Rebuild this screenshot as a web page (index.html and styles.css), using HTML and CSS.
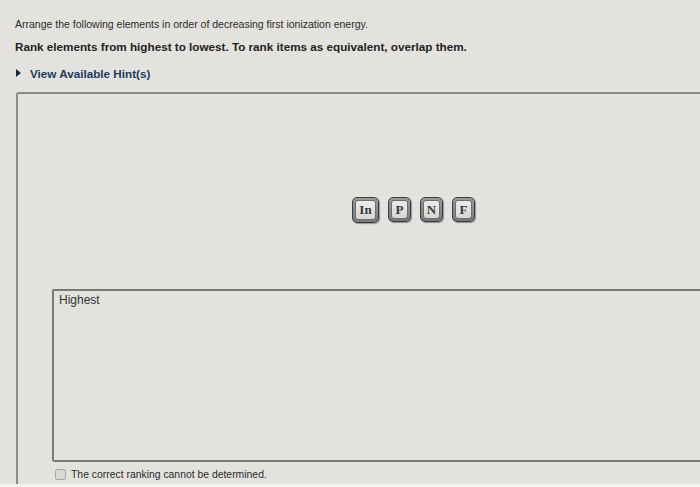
FILE: index.html
```html
<!DOCTYPE html>
<html>
<head>
<meta charset="utf-8">
<link rel="stylesheet" href="styles.css">
</head>
<body>
<div class="page">
  <p class="q">Arrange the following elements in order of decreasing first ionization energy.</p>
  <p class="inst">Rank elements from highest to lowest. To rank items as equivalent, overlap them.</p>
  <div class="hint"><span class="tri"></span><span class="hint-text">View Available Hint(s)</span></div>
  <div class="outer">
    <div class="tiles">
      <div class="tile wide"><span>In</span></div>
      <div class="tile"><span>P</span></div>
      <div class="tile"><span>N</span></div>
      <div class="tile"><span>F</span></div>
    </div>
    <div class="rank">
      <div class="rank-label">Highest</div>
    </div>
    <div class="check-row"><span class="box"></span><span class="check-text">The correct ranking cannot be determined.</span></div>
  </div>
</div>
<div class="strip"></div>
</body>
</html>
```
FILE: styles.css
```css
html, body {
  margin: 0;
  padding: 0;
  height: 487px;
  overflow: hidden;
}
body {
  background: #e4e2df;
  font-family: "Liberation Sans", Arial, sans-serif;
  color: #222;
  position: relative;
}
.page {
  padding: 17px 0 0 15px;
}
.q {
  margin: 0;
  font-size: 10.5px;
  line-height: 14px;
  color: #2a2a2a;
}
.inst {
  margin: 9px 0 0 0;
  font-size: 11.7px;
  line-height: 14px;
  font-weight: bold;
  color: #222;
}
.hint {
  display: flex;
  align-items: center;
  margin: 12px 0 0 1px;
  height: 14px;
}
.tri {
  width: 0;
  height: 0;
  border-top: 4px solid transparent;
  border-bottom: 4px solid transparent;
  border-left: 5px solid #1e2a3a;
  margin-right: 9px;
}
.hint-text {
  font-size: 11.7px;
  font-weight: bold;
  color: #1d3a5c;
}
.outer {
  margin: 12px 0 0 1px;
  border-top: 2px solid #8c8b8a;
  border-left: 2px solid #8c8b8a;
  border-top-left-radius: 3px;
  height: 394px;
  padding-top: 103px;
  box-sizing: border-box;
}
.tiles {
  display: flex;
  gap: 9px;
  margin-left: 334px;
  height: 27px;
}
.tile {
  width: 23px;
  height: 25px;
  border: 1px solid #3c3c3c;
  border-radius: 5px;
  background: linear-gradient(#9a9a9a, #7a7a7a);
  box-shadow: 1px 1px 1px rgba(0,0,0,0.35);
  padding: 2px;
  box-sizing: border-box;
  display: flex;
}
.tile.wide {
  width: 27px;
  height: 26px;
}
.tile span {
  flex: 1;
  background: linear-gradient(#ececeb, #d6d6d4);
  border-radius: 3px;
  border: 1px solid #6e6e6e;
  display: flex;
  align-items: center;
  justify-content: center;
  font-family: "Liberation Serif", "Times New Roman", serif;
  font-size: 13px;
  font-weight: bold;
  color: #3a3a3a;
}
.rank {
  margin: 65px 0 0 34px;
  border-top: 2px solid #7a7978;
  border-left: 2px solid #7a7978;
  border-bottom: 2px solid #7a7978;
  border-top-left-radius: 2px;
  border-bottom-left-radius: 3px;
  height: 173px;
  box-sizing: border-box;
  padding: 2px 0 0 5px;
}
.rank-label {
  font-size: 12px;
  line-height: 14px;
  color: #333;
}
.check-row {
  display: flex;
  align-items: center;
  margin: 7px 0 0 37px;
}
.box {
  width: 9px;
  height: 9px;
  border: 1px solid #a8a8a8;
  border-radius: 2px;
  background: #dcdad8;
  margin-right: 5px;
}
.check-text {
  font-size: 10.4px;
  color: #2a2a2a;
}
.strip {
  position: absolute;
  left: 0;
  right: 0;
  bottom: 0;
  height: 3px;
  background: #f4f3f2;
}
```
